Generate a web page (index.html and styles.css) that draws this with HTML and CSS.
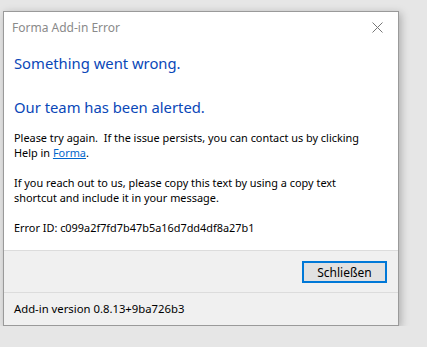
FILE: index.html
```html
<!DOCTYPE html>
<html lang="en">
<head>
  <meta charset="UTF-8">
  <title>Forma Add-in Error</title>
  <link rel="stylesheet" href="styles.css">
</head>
<body>
  <div class="dialog">
    <div class="title-bar">
      <span class="title">Forma Add-in Error</span>
      <svg class="close" width="11" height="11" viewBox="0 0 11 11">
        <path d="M0.5 0.5 L10.5 10.5 M10.5 0.5 L0.5 10.5" stroke="#777" stroke-width="1" fill="none"/>
      </svg>
    </div>
    <div class="content">
      <h1>Something went wrong.</h1>
      <h1 class="second">Our team has been alerted.</h1>
      <p>Please try again.&nbsp; If the issue persists, you can contact us by clicking Help in <a href="#">Forma</a>.</p>
      <p>If you reach out to us, please copy this text by using a copy text shortcut and include it in your message.</p>
      <p>Error ID: c099a2f7fd7b47b5a16d7dd4df8a27b1</p>
    </div>
    <div class="actions">
      <button type="button">Schließen</button>
    </div>
    <div class="footer">Add-in version 0.8.13+9ba726b3</div>
  </div>
</body>
</html>
```

FILE: styles.css
```css
body {
  margin: 0;
  padding: 0;
  background: #e6e6e6;
  font-family: 'Noto Sans', sans-serif;
  color: #000;
}

.dialog {
  margin: 11px 0 0 3px;
  width: 394px;
  height: 313px;
  border: 1px solid #9a9a9a;
  background: #fff;
  box-shadow: 2px 2px 8px rgba(0, 0, 0, 0.25);
  display: flex;
  flex-direction: column;
}

.title-bar {
  display: flex;
  justify-content: space-between;
  align-items: center;
  height: 30px;
  padding: 0 15px 0 8px;
}

.title {
  font-size: 12px;
  color: #8a8a8a;
  padding-top: 2px;
}

.close {
  margin-top: 1px;
}

.content {
  padding: 2px 10px 0 10px;
  flex: 1;
}

h1 {
  font-size: 14.8px;
  font-weight: 400;
  color: #0a47b8;
  margin: 10px 0 0;
  line-height: 20px;
}

h1.second {
  margin: 24px 0 13px;
}

p {
  font-size: 10.9px;
  line-height: 15px;
  margin: 0 0 15px;
  max-width: 348px;
}

a {
  color: #0066cc;
}

.actions {
  height: 41px;
  background: #f0f0f0;
  border-top: 1px solid #dcdcdc;
  display: flex;
  justify-content: flex-end;
  align-items: center;
  padding-right: 11px;
}

button {
  width: 85px;
  height: 22px;
  background: #e1e1e1;
  border: 2px solid #0078d7;
  font-family: 'Noto Sans', sans-serif;
  font-size: 12px;
  color: #000;
  padding: 0;
  margin-top: 1px;
}

.footer {
  height: 33px;
  background: #f0f0f0;
  border-top: 1px solid #dcdcdc;
  font-size: 11.3px;
  padding: 0 10px;
  display: flex;
  align-items: center;
}
```
